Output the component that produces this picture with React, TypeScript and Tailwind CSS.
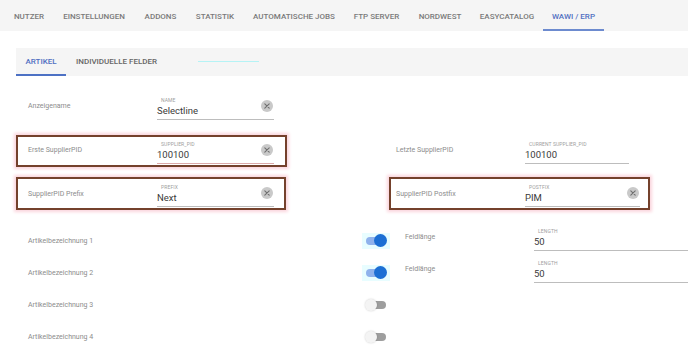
import React from "react";

const tabs: { label: string; w: string; active?: boolean }[] = [
  { label: "NUTZER", w: "w-[48px]" },
  { label: "EINSTELLUNGEN", w: "w-[82px]" },
  { label: "ADDONS", w: "w-[51px]" },
  { label: "STATISTIK", w: "w-[58px]" },
  { label: "AUTOMATISCHE JOBS", w: "w-[100px]" },
  { label: "FTP SERVER", w: "w-[65px]" },
  { label: "NORDWEST", w: "w-[62px]" },
  { label: "EASYCATALOG", w: "w-[72px]" },
  { label: "WAWI / ERP", w: "w-[61px]", active: true },
];

function ClearIcon() {
  return (
    <div className="absolute right-[1px] top-[3px] w-[12px] h-[12px] rounded-full bg-[#c9c9c9] flex items-center justify-center">
      <svg width="8" height="8" viewBox="0 0 8 8">
        <path d="M1.8 1.8 L6.2 6.2 M6.2 1.8 L1.8 6.2" stroke="#6f6f6f" strokeWidth="1.1" strokeLinecap="round" />
      </svg>
    </div>
  );
}

function Field({
  label,
  value,
  w,
  clear,
  mt,
  line = "border-[#bdbdbd]",
}: {
  label: string;
  value: string;
  w: string;
  clear?: boolean;
  mt: string;
  line?: string;
}) {
  return (
    <div className={`relative flex flex-col ${w} ${mt} border-b ${line} pb-[1px]`}>
      <span className="pl-[4px] text-[5px] leading-[7px] text-[#a0a0a0] uppercase tracking-[0.1px]">{label}</span>
      <span className="text-[9.5px] leading-[14px] text-[#3a3a3a]">{value}</span>
      {clear && <ClearIcon />}
    </div>
  );
}

function Toggle({ on }: { on: boolean }) {
  if (on) {
    return (
      <div className="relative w-[28px] h-[16px] mt-[8px] bg-[#e8fdff]">
        <div className="absolute left-[4px] top-[4px] w-[18px] h-[8px] rounded-full bg-[#8fb2ec]" />
        <div className="absolute left-[12px] top-[1px] w-[13px] h-[13px] rounded-full bg-[#1c6fd4]" />
      </div>
    );
  }
  return (
    <div className="relative w-[28px] h-[16px] mt-[8px]">
      <div className="absolute left-[9px] top-[4px] w-[15px] h-[8px] rounded-r-full rounded-l-[2px] bg-[#9e9e9e]" />
      <div className="absolute left-[3px] top-[2px] w-[12px] h-[12px] rounded-full bg-[#f4f4f4] shadow-[0_0_2px_rgba(0,0,0,0.2)]" />
    </div>
  );
}

const label = "text-[7px] leading-[9px] text-[#8c8c8c]";
const box = "border-2 border-[#74412c] shadow-[0_0_3px_2px_#fbd6de]";

function ToggleRow({ name, on, length }: { name: string; on: boolean; length?: string }) {
  return (
    <div className="flex items-start h-[32px] ml-[16px] pl-[12px]">
      <div className={`w-[334px] mt-[11.5px] ${label}`}>{name}</div>
      <Toggle on={on} />
      {length && (
        <>
          <div className={`ml-[15px] w-[129px] mt-[7.5px] ${label}`}>Feldlänge</div>
          <Field label="Length" value={length} w="w-[154px]" mt="mt-[2.5px]" />
        </>
      )}
    </div>
  );
}

export default function App() {
  return (
    <div className="w-[688px] h-[352px] overflow-hidden bg-white font-[Roboto,sans-serif]">
      {/* Top tab bar */}
      <div className="flex h-[31px] bg-[#f5f5f5] pl-[5px]">
        {tabs.map((t) => (
          <div
            key={t.label}
            className={`${t.w} flex items-center justify-center text-[8px] font-medium ${
              t.active ? "border-b-2 border-[#6d8bcf] text-[#5170c2] pt-[5px]" : "text-[#7a7a7a] pt-[3px]"
            }`}
          >
            {t.label}
          </div>
        ))}
      </div>

      {/* Sub tabs */}
      <div className="flex items-stretch h-[28px] mt-[17px] ml-[16px] bg-[#f5f5f5]">
        <div className="w-[50px] flex items-center justify-center pt-[2px] border-b-2 border-[#4d71c4] text-[8px] font-medium text-[#5170c2]">
          ARTIKEL
        </div>
        <div className="w-[101px] flex items-center justify-center text-[8px] font-medium text-[#666666]">
          INDIVIDUELLE FELDER
        </div>
        <div className="ml-[31px] mt-[13px] w-[61px] h-[1px] bg-[#b5f3f5]" />
      </div>

      {/* Row 1 */}
      <div className="flex mt-[14px] h-[32px]">
        <div className="ml-[16px] w-[271px] flex items-start pl-[12px]">
          <div className={`w-[129px] mt-[11.5px] ${label}`}>Anzeigename</div>
          <Field label="Name" value="Selectline" w="w-[117px]" clear mt="mt-[7px]" />
        </div>
      </div>

      {/* Row 2 */}
      <div className="flex mt-[13px] h-[32px]">
        <div className={`ml-[16px] w-[271px] flex items-start pl-[10px] ${box}`}>
          <div className={`w-[129px] mt-[8.5px] ${label}`}>Erste SupplierPID</div>
          <Field label="Supplier_pid" value="100100" w="w-[117px]" clear mt="mt-[4px]" line="border-[#dcaaaa]" />
        </div>
        <div className="ml-[102px] w-[261px] flex items-start pl-[5px] border-2 border-transparent">
          <div className={`w-[129px] mt-[8.5px] ${label}`}>Letzte SupplierPID</div>
          <Field label="Current supplier_pid" value="100100" w="w-[104px]" mt="mt-[3.5px]" />
        </div>
      </div>

      {/* Row 3 */}
      <div className="flex mt-[10px] h-[33px]">
        <div className={`ml-[16px] w-[270px] flex items-start pl-[10px] ${box}`}>
          <div className={`w-[129px] mt-[10.5px] ${label}`}>SupplierPID Prefix</div>
          <Field label="Prefix" value="Next" w="w-[117px]" clear mt="mt-[5px]" />
        </div>
        <div className={`ml-[103px] w-[261px] flex items-start pl-[5px] ${box}`}>
          <div className={`w-[129px] mt-[10.5px] ${label}`}>SupplierPID Postfix</div>
          <Field label="Postfix" value="PIM" w="w-[115px]" clear mt="mt-[5px]" />
        </div>
      </div>

      {/* Toggle rows */}
      <div className="mt-[15px] flex flex-col">
        <ToggleRow name="Artikelbezeichnung 1" on length="50" />
        <ToggleRow name="Artikelbezeichnung 2" on length="50" />
        <ToggleRow name="Artikelbezeichnung 3" on={false} />
        <ToggleRow name="Artikelbezeichnung 4" on={false} />
      </div>
    </div>
  );
}
